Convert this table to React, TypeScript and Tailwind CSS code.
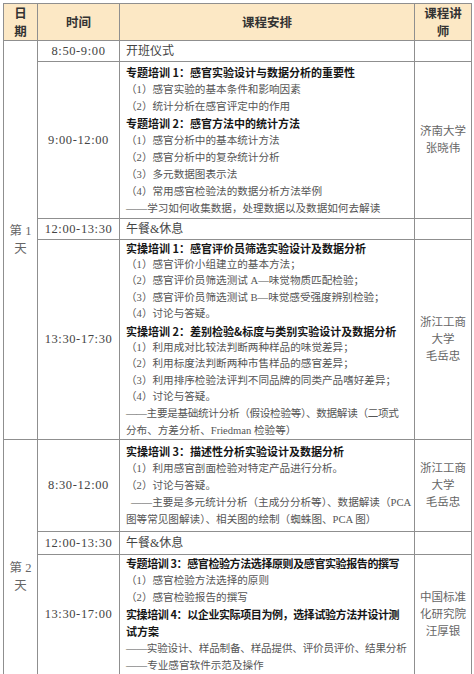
import React from "react";

const BOLD = "whitespace-nowrap font-['Noto_Sans_CJK_SC',sans-serif] font-bold text-[11px] text-[#161616]";
const NORM = "whitespace-nowrap font-['Liberation_Serif','Noto_Sans_CJK_SC',serif] text-[10.6px] text-[#555]";
const TD = "border border-[#8f8f8f] align-middle p-0";
const TIME =
  "border border-[#8f8f8f] align-middle text-center whitespace-nowrap font-['Liberation_Serif','Noto_Sans_CJK_SC',serif] text-[12.5px] tracking-[0.6px] text-[#444]";
const TEACH =
  "border border-[#8f8f8f] align-middle text-center font-['Liberation_Serif','Noto_Sans_CJK_SC',serif] text-[11.5px] leading-[17px] text-[#666]";
const TH =
  "border border-[#8f8f8f] bg-[#fce8c5] align-middle text-center font-['Noto_Sans_CJK_SC',sans-serif] font-bold text-[12.5px] leading-[18px] text-[#333]";

type Line = { t: string; b?: boolean; x?: string };

function Lines({ lines, lead }: { lines: Line[]; lead: string }) {
  return (
    <div className={"pl-[6px] pr-[2px] " + lead}>
      {lines.map((l, i) => (
        <div key={i} className={(l.b ? BOLD : NORM) + " " + (l.x ?? "")}>
          {l.t}
        </div>
      ))}
    </div>
  );
}

const r2: Line[] = [
  { t: "专题培训 1：感官实验设计与数据分析的重要性", b: true },
  { t: "（1）感官实验的基本条件和影响因素" },
  { t: "（2）统计分析在感官评定中的作用" },
  { t: "专题培训 2：感官方法中的统计方法", b: true },
  { t: "（1）感官分析中的基本统计方法" },
  { t: "（2）感官分析中的复杂统计分析" },
  { t: "（3）多元数据图表示法" },
  { t: "（4）常用感官检验法的数据分析方法举例" },
  { t: "——学习如何收集数据，处理数据以及数据如何去解读" },
];

const r4: Line[] = [
  { t: "实操培训 1：感官评价员筛选实验设计及数据分析", b: true },
  { t: "（1）感官评价小组建立的基本方法；" },
  { t: "（2）感官评价员筛选测试 A—味觉物质匹配检验；" },
  { t: "（3）感官评价员筛选测试 B—味觉感受强度辨别检验；" },
  { t: "（4）讨论与答疑。" },
  { t: "实操培训 2：差别检验&标度与类别实验设计及数据分析", b: true },
  { t: "（1）利用成对比较法判断两种样品的味觉差异；" },
  { t: "（2）利用标度法判断两种市售样品的感官差异；" },
  { t: "（3）利用排序检验法评判不同品牌的同类产品嗜好差异；" },
  { t: "（4）讨论与答疑。" },
  { t: "——主要是基础统计分析（假设检验等）、数据解读（二项式", x: "tracking-[-0.3px]" },
  { t: "分布、方差分析、Friedman 检验等）" },
];

const r5: Line[] = [
  { t: "实操培训 3：描述性分析实验设计及数据分析", b: true },
  { t: "（1）利用感官剖面检验对特定产品进行分析。" },
  { t: "（2）讨论与答疑。" },
  { t: "——主要是多元统计分析（主成分分析等）、数据解读（PCA", x: "pl-[5px]" },
  { t: "图等常见图解读）、相关图的绘制（蜘蛛图、PCA 图）" },
];

const r7: Line[] = [
  { t: "专题培训 3：感官检验方法选择原则及感官实验报告的撰写", b: true, x: "tracking-[-0.4px]" },
  { t: "（1）感官检验方法选择的原则" },
  { t: "（2）感官检验报告的撰写" },
  { t: "实操培训 4：以企业实际项目为例，选择试验方法并设计测", b: true, x: "tracking-[-0.4px]" },
  { t: "试方案", b: true },
  { t: "——实验设计、样品制备、样品提供、评价员评价、结果分析", x: "tracking-[-0.2px]" },
  { t: "——专业感官软件示范及操作" },
];

export default function App() {
  return (
    <div className="bg-white pl-[3px] pt-[3px] w-[474px]">
      <table className="table-fixed border-collapse w-[468px]">
        <colgroup>
          <col className="w-[34px]" />
          <col className="w-[82px]" />
          <col className="w-[295px]" />
          <col className="w-[57px]" />
        </colgroup>
        <tbody>
          <tr className="h-[35px]">
            <th className={TH}>
              日<br />期
            </th>
            <th className={TH}>时间</th>
            <th className={TH}>课程安排</th>
            <th className={TH}>
              课程讲<br />师
            </th>
          </tr>
          <tr className="h-[21px]">
            <td rowSpan={4} className={TEACH + " text-[12.5px] leading-[18px] text-[#555]"}>
              第 1<br />天
            </td>
            <td className={TIME}>8:50-9:00</td>
            <td className={TD}>
              <div className="whitespace-nowrap font-['Liberation_Serif','Noto_Sans_CJK_SC',serif] pl-[6px] text-[12px] text-[#444]">开班仪式</div>
            </td>
            <td className={TD}></td>
          </tr>
          <tr className="h-[157px]">
            <td className={TIME}>9:00-12:00</td>
            <td className={TD}>
              <Lines lines={r2} lead="leading-[17px]" />
            </td>
            <td className={TEACH}>
              济南大学<br />张晓伟
            </td>
          </tr>
          <tr className="h-[21px]">
            <td className={TIME}>12:00-13:30</td>
            <td className={TD}>
              <div className="whitespace-nowrap font-['Liberation_Serif','Noto_Sans_CJK_SC',serif] pl-[6px] text-[12px] text-[#444]">午餐&amp;休息</div>
            </td>
            <td className={TD}></td>
          </tr>
          <tr className="h-[199px]">
            <td className={TIME}>13:30-17:30</td>
            <td className={TD}>
              <Lines lines={r4} lead="leading-[16.6px]" />
            </td>
            <td className={TEACH}>
              浙江工商<br />大学<br />毛岳忠
            </td>
          </tr>
          <tr className="h-[92px]">
            <td rowSpan={4} className={TEACH + " text-[12.5px] leading-[18px] text-[#555]"}>
              第 2<br />天
            </td>
            <td className={TIME}>8:30-12:00</td>
            <td className={TD}>
              <Lines lines={r5} lead="leading-[17px]" />
            </td>
            <td className={TEACH}>
              浙江工商<br />大学<br />毛岳忠
            </td>
          </tr>
          <tr className="h-[23px]">
            <td className={TIME}>12:00-13:30</td>
            <td className={TD}>
              <div className="whitespace-nowrap font-['Liberation_Serif','Noto_Sans_CJK_SC',serif] pl-[6px] text-[12px] text-[#444]">午餐&amp;休息</div>
            </td>
            <td className={TD}></td>
          </tr>
          <tr className="h-[120px]">
            <td className={TIME}>13:30-17:00</td>
            <td className={TD}>
              <Lines lines={r7} lead="leading-[17px]" />
            </td>
            <td className={TEACH}>
              中国标准<br />化研究院<br />汪厚银
            </td>
          </tr>
          <tr className="h-[40px]">
            <td className={TIME}></td>
            <td className={TD}></td>
            <td className={TD}></td>
          </tr>
        </tbody>
      </table>
    </div>
  );
}
